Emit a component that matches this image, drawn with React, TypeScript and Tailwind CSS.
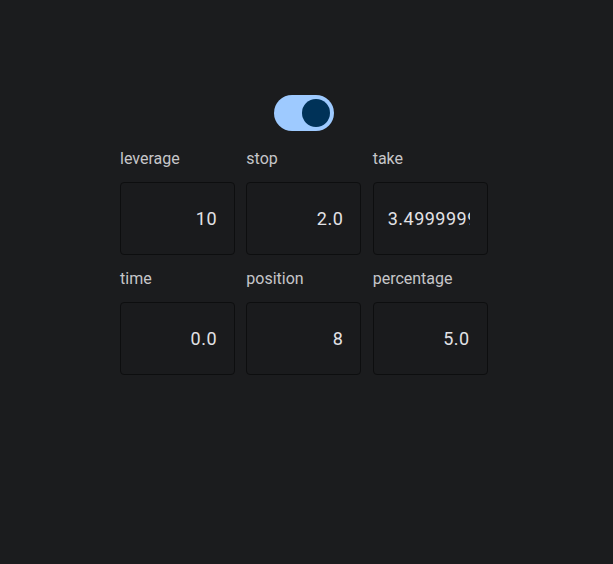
import React, { useState } from 'react';

const fields = [
  { label: 'leverage', value: '10' },
  { label: 'stop', value: '2.0' },
  { label: 'take', value: '3.4999999999999996' },
  { label: 'time', value: '0.0' },
  { label: 'position', value: '8' },
  { label: 'percentage', value: '5.0' },
];

const Toggle: React.FC<{ on: boolean; onChange: (v: boolean) => void }> = ({ on, onChange }) => (
  <button
    type="button"
    onClick={() => onChange(!on)}
    className={`flex h-[36px] w-[60px] items-center rounded-full px-[4px] ${on ? 'justify-end bg-[#9ecaff]' : 'justify-start bg-[#3a3b3e]'}`}
  >
    <span className={`block h-[28px] w-[28px] rounded-full ${on ? 'bg-[#003258]' : 'bg-[#8e9099]'}`} />
  </button>
);

export default function App() {
  const [on, setOn] = useState(true);
  const [values, setValues] = useState(fields.map((f) => f.value));

  return (
    <div className="min-h-[564px] w-full bg-[#1b1c1e] pt-[95px] font-['Roboto','Liberation_Sans',sans-serif]">
      <div className="ml-[120px] flex w-[367px] flex-col items-center">
        <Toggle on={on} onChange={setOn} />
        <div className="mt-[16px] grid w-full grid-cols-3 gap-x-[12px] gap-y-[12px]">
          {fields.map((f, i) => (
            <div key={f.label} className="flex flex-col">
              <span className="h-[24px] text-[16px] leading-[24px] text-[#c6c6c9]">{f.label}</span>
              <input
                value={values[i]}
                onChange={(e) => setValues(values.map((v, j) => (j === i ? e.target.value : v)))}
                className="mt-[11px] h-[73px] w-[115px] rounded-[4px] border border-[#0d0e0f] bg-[#1a1b1d] pl-[14px] pr-[17px] text-right text-[18px] tracking-[0.5px] text-[#e2e2e6] outline-none"
              />
            </div>
          ))}
        </div>
      </div>
    </div>
  );
}
